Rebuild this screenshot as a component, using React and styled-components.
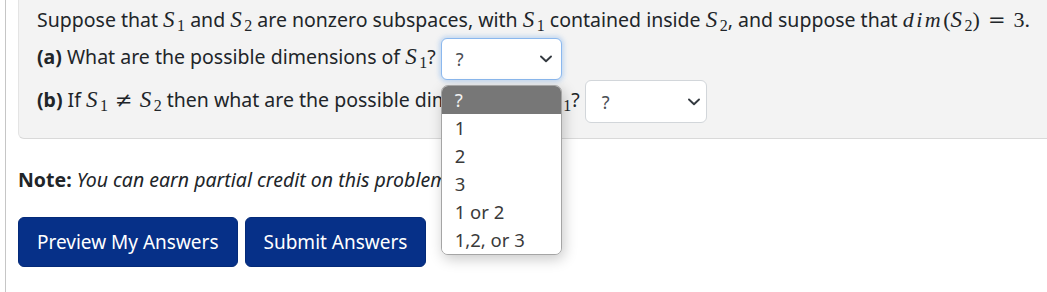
import React from 'react';
import styled, { createGlobalStyle } from 'styled-components';

const Global = createGlobalStyle`
  html, body { margin: 0; padding: 0; background: #fff; overflow: hidden; }
  body { font-family: "Noto Sans", "Open Sans", sans-serif; color: #212529; }
`;

const Page = styled.div`
  margin-left: 5px;
  border-left: 1px solid #c6c6c6;
  padding-left: 12px;
  min-height: 292px;
  box-sizing: border-box;
`;

const Panel = styled.div`
  background: #f3f3f3;
  border-left: 1px solid #e4e4e4;
  border-bottom: 1px solid #d9d9d9;
  border-radius: 0 0 0 6px;
  margin-right: -20px;
  padding: 6px 0 17px 18px;
  font-size: 19.5px;
  line-height: 27px;
`;

const Line = styled.div`
  height: ${p => p.$h || 27}px;
  line-height: ${p => p.$h || 27}px;
  margin-top: ${p => p.$mt || 0}px;
  white-space: nowrap;
`;

const M = styled.span`
  font-family: "Liberation Serif", "DejaVu Serif", serif;
  font-style: ${p => (p.$up ? 'normal' : 'italic')};
  font-size: 22px;
  letter-spacing: ${p => p.$ls || 0}px;
`;

const SVar = styled.span`
  font-family: "Liberation Serif", "DejaVu Serif", serif;
  font-style: italic;
  font-size: 23px;
  margin-right: 1.5px;
`;

const Sub = styled.sub`
  font-family: "Liberation Serif", "DejaVu Serif", serif;
  font-style: normal;
  font-size: 16px;
  vertical-align: -0.25em;
  line-height: 0;
  margin-left: 1px;
`;

const Rel = styled.span`
  font-family: "DejaVu Serif", "Liberation Serif", serif;
  font-size: 21px;
  margin: 0 ${p => p.$m || 3}px;
`;

const Select = styled.span`
  position: relative;
  display: inline-flex;
  align-items: center;
  justify-content: space-between;
  box-sizing: border-box;
  width: ${p => p.$w}px;
  height: ${p => p.$h}px;
  vertical-align: middle;
  margin-left: 5px;
  padding: 0 ${p => p.$pr}px 0 ${p => p.$pl}px;
  background: #fff;
  border: 1px solid ${p => (p.$focus ? '#8bb8ee' : '#d2d6da')};
  border-radius: 6px;
  box-shadow: ${p => (p.$focus ? '0 0 4px 2px rgba(110, 165, 235, 0.35)' : 'none')};
  font-size: 18px;
  line-height: 1;
  color: #4a4f55;
`;

const Menu = styled.div`
  position: absolute;
  z-index: 5;
  top: calc(100% + 6px);
  left: -1px;
  width: 121px;
  box-sizing: border-box;
  background: #fff;
  border: 1px solid #a5a5a5;
  border-radius: 7px;
  overflow: hidden;
  box-shadow: 2px 4px 14px rgba(0, 0, 0, 0.22);
  font-size: 18.5px;
  line-height: 28px;
`;

const Option = styled.div`
  height: 28px;
  padding-left: 13px;
  background: ${p => (p.$active ? '#777' : '#fff')};
  color: ${p => (p.$active ? '#f2f2f2' : '#3a3a3a')};
`;

const Note = styled.p`
  margin: 27px 0 0 0;
  font-size: 19.5px;
  line-height: 27px;
  white-space: nowrap;
  em { font-style: italic; }
`;

const Buttons = styled.div`
  display: flex;
  gap: 7px;
  margin-top: 24px;
`;

const Button = styled.button`
  height: 50px;
  padding: 0 18px;
  background: #063088;
  color: #fff;
  border: 1px solid #042a78;
  border-radius: 6px;
  font-family: inherit;
  font-size: 19px;
`;

const Chevron = () => (
  <svg width="12" height="8" viewBox="0 0 12 8" fill="none">
    <path d="M1 1.5 L6 6.2 L11 1.5" stroke="#343a40" strokeWidth="1.9" strokeLinecap="round" strokeLinejoin="round" />
  </svg>
);

const S = ({ n }) => (
  <span><SVar>S</SVar><Sub>{n}</Sub></span>
);

const options = ['?', '1', '2', '3', '1 or 2', '1,2, or 3'];

export default function App() {
  return (
    <>
      <Global />
      <Page>
        <Panel>
          <Line>
            Suppose that <S n={1} /> and <S n={2} /> are nonzero subspaces, with <S n={1} /> contained inside <S n={2} />, and suppose that <M $ls={2.5}>dim</M><M $up>(</M><S n={2} /><M $up>)</M><Rel $m={8}>=</Rel><M $up>3.</M>
          </Line>
          <Line $h={42} $mt={3}>
            <b>(a)</b> What are the possible dimensions of <S n={1} />?
            <Select $w={121} $h={42} $pl={14} $pr={9} $focus>
              <span>?</span>
              <Chevron />
              <Menu>
                {options.map((o, i) => (
                  <Option key={o} $active={i === 0}>{o}</Option>
                ))}
              </Menu>
            </Select>
          </Line>
          <Line $h={43}>
            <b>(b)</b> If <S n={1} /><Rel $m={7}>≠</Rel><S n={2} /> then what are the possible dimensions of <S n={1} />?
            <Select $w={122} $h={43} $pl={16} $pr={6}>
              <span>?</span>
              <Chevron />
            </Select>
          </Line>
        </Panel>
        <Note>
          <b>Note:</b> <em>You can earn partial credit on this problem.</em>
        </Note>
        <Buttons>
          <Button>Preview My Answers</Button>
          <Button>Submit Answers</Button>
        </Buttons>
      </Page>
    </>
  );
}
